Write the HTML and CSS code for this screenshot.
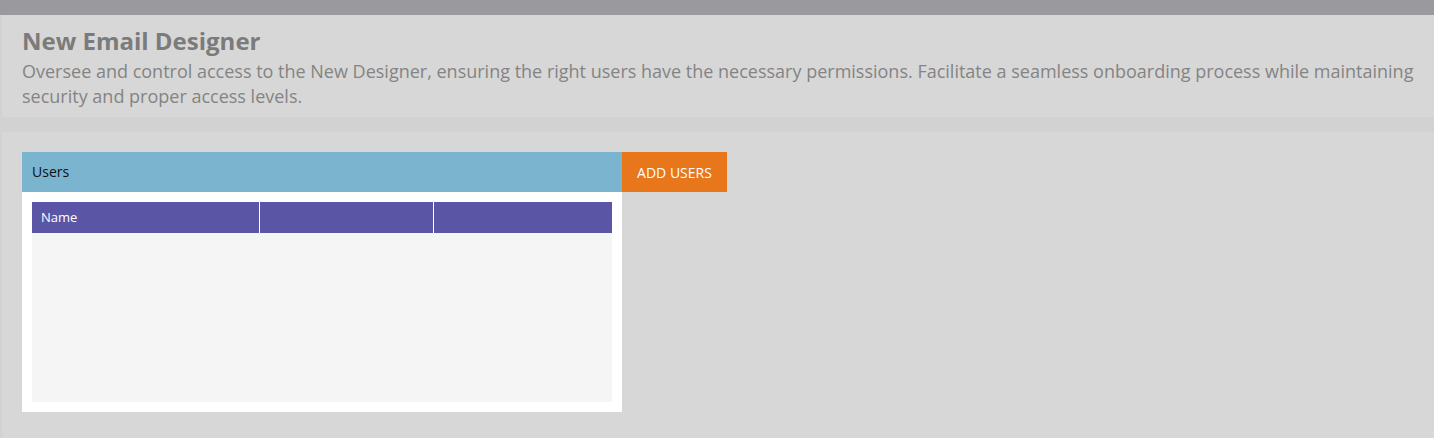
FILE: index.html
```html
<!DOCTYPE html>
<html>
<head>
<meta charset="utf-8">
<link rel="stylesheet" href="styles.css">
</head>
<body>
<div class="topbar"></div>
<div class="page">
  <section class="intro">
    <h1 class="title">New Email Designer</h1>
    <p class="desc">Oversee and control access to the New Designer, ensuring the right users have the necessary permissions. Facilitate a seamless onboarding process while maintaining security and proper access levels.</p>
  </section>
  <section class="content">
    <div class="users-row">
      <div class="users-card">
        <div class="users-head">Users</div>
        <div class="users-body">
          <div class="table">
            <div class="thead">
              <div class="th th-name">Name</div>
              <div class="th th-2"></div>
              <div class="th th-3"></div>
            </div>
            <div class="tbody"></div>
          </div>
        </div>
      </div>
      <button class="add-btn">ADD USERS</button>
    </div>
  </section>
</div>
</body>
</html>
```
FILE: styles.css
```css
html, body {
  margin: 0;
  padding: 0;
  height: 100%;
}
body {
  background: #d2d2d2;
  font-family: "Open Sans", "Noto Sans", sans-serif;
  overflow: hidden;
}
.topbar {
  height: 15px;
  background: #9a999e;
}
.page {
  padding-left: 2px;
  display: flex;
  flex-direction: column;
  gap: 15px;
  height: calc(100% - 15px);
}
.intro {
  background: #d7d7d7;
  padding: 11px 8px 8px 20px;
}
.title {
  margin: 0;
  font-size: 24px;
  font-weight: 700;
  line-height: 30px;
  color: #7b7b7b;
}
.desc {
  margin: 3px 0 0 0;
  font-size: 18px;
  line-height: 25px;
  color: #848484;
}
.content {
  flex: 1;
  background: #d7d7d7;
  padding: 20px 20px 0 20px;
}
.users-row {
  display: flex;
  align-items: flex-start;
}
.users-card {
  width: 600px;
}
.users-head {
  height: 40px;
  background: #7ab4cf;
  color: #111;
  font-size: 14px;
  line-height: 40px;
  padding-left: 10px;
}
.users-body {
  background: #ffffff;
  padding: 10px;
}
.table {
  display: flex;
  flex-direction: column;
}
.thead {
  display: flex;
  height: 31px;
  background: #5a55a5;
}
.th {
  color: #ffffff;
  font-size: 13px;
  line-height: 31px;
  box-sizing: border-box;
}
.th-name {
  width: 228px;
  padding-left: 9px;
  border-right: 1px solid #ffffff;
}
.th-2 {
  width: 174px;
  border-right: 1px solid #ffffff;
}
.th-3 {
  flex: 1;
}
.tbody {
  height: 169px;
  background: #f5f5f5;
}
.add-btn {
  height: 40px;
  width: 105px;
  border: none;
  margin: 0;
  padding: 0;
  background: #e8761b;
  color: #ffffff;
  font-family: "Open Sans", "Noto Sans", sans-serif;
  font-size: 14px;
  cursor: pointer;
}
```
